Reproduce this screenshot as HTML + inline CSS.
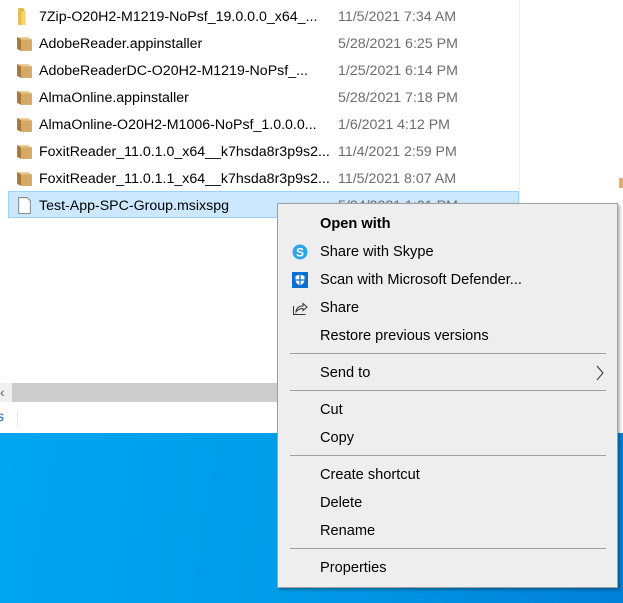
<!DOCTYPE html>
<html><head><style>
body{margin:0;width:623px;height:603px;overflow:hidden;position:relative;background:#fff;font-family:"Liberation Sans",sans-serif;}
.row{position:absolute;left:0;height:26px;width:519px;font-size:14.2px;line-height:26px;color:#000;}
.row .n{position:absolute;left:39px;white-space:nowrap;}
.row .d{position:absolute;left:338px;color:#6d6d6d;white-space:nowrap;}
.ic{position:absolute;left:16px;top:4px;width:17px;height:17px;}
.menu{position:absolute;left:277px;top:203px;width:339px;height:383px;background:#eeeeee;border:1px solid #a0a0a0;box-shadow:2px 2px 3px rgba(0,0,0,.3);}
.mi{position:absolute;left:42px;font-size:14.6px;color:#000;line-height:20px;white-space:nowrap;}
.sep{position:absolute;left:12px;width:316px;height:1px;background:#a0a0a0;}
</style></head><body>
<div style="position:absolute;left:519px;top:0;width:1px;height:383px;background:#f0f0f0"></div>
<div style="position:absolute;left:8px;top:191px;width:509px;height:25px;background:#cce8ff;border:1px solid #99d1ff"></div>

<div class="row" style="top:4px"><svg class="ic" viewBox="0 0 16 16"><path d="M2 0h5l1 2v14H2z" fill="#e8b84a"/><path d="M5 3h4v13H5z" fill="#f6d36e"/></svg><span class="n">7Zip-O20H2-M1219-NoPsf_19.0.0.0_x64_...</span><span class="d">11/5/2021 7:34 AM</span></div>
<div class="row" style="top:31px"><svg class="ic" viewBox="0 0 16 16"><path d="M1 2l4 2v11L1 13z" fill="#a8773a"/><path d="M5 4h10v11H5z" fill="#d6a865"/><path d="M1 2h10l4 2H5z" fill="#e9c588"/></svg><span class="n">AdobeReader.appinstaller</span><span class="d">5/28/2021 6:25 PM</span></div>
<div class="row" style="top:58px"><svg class="ic" viewBox="0 0 16 16"><path d="M1 2l4 2v11L1 13z" fill="#a8773a"/><path d="M5 4h10v11H5z" fill="#d6a865"/><path d="M1 2h10l4 2H5z" fill="#e9c588"/></svg><span class="n">AdobeReaderDC-O20H2-M1219-NoPsf_...</span><span class="d">1/25/2021 6:14 PM</span></div>
<div class="row" style="top:85px"><svg class="ic" viewBox="0 0 16 16"><path d="M1 2l4 2v11L1 13z" fill="#a8773a"/><path d="M5 4h10v11H5z" fill="#d6a865"/><path d="M1 2h10l4 2H5z" fill="#e9c588"/></svg><span class="n">AlmaOnline.appinstaller</span><span class="d">5/28/2021 7:18 PM</span></div>
<div class="row" style="top:112px"><svg class="ic" viewBox="0 0 16 16"><path d="M1 2l4 2v11L1 13z" fill="#a8773a"/><path d="M5 4h10v11H5z" fill="#d6a865"/><path d="M1 2h10l4 2H5z" fill="#e9c588"/></svg><span class="n">AlmaOnline-O20H2-M1006-NoPsf_1.0.0.0...</span><span class="d">1/6/2021 4:12 PM</span></div>
<div class="row" style="top:139px"><svg class="ic" viewBox="0 0 16 16"><path d="M1 2l4 2v11L1 13z" fill="#a8773a"/><path d="M5 4h10v11H5z" fill="#d6a865"/><path d="M1 2h10l4 2H5z" fill="#e9c588"/></svg><span class="n">FoxitReader_11.0.1.0_x64__k7hsda8r3p9s2...</span><span class="d">11/4/2021 2:59 PM</span></div>
<div class="row" style="top:166px"><svg class="ic" viewBox="0 0 16 16"><path d="M1 2l4 2v11L1 13z" fill="#a8773a"/><path d="M5 4h10v11H5z" fill="#d6a865"/><path d="M1 2h10l4 2H5z" fill="#e9c588"/></svg><span class="n">FoxitReader_11.0.1.1_x64__k7hsda8r3p9s2...</span><span class="d">11/5/2021 8:07 AM</span></div>
<div class="row" style="top:193px"><svg class="ic" viewBox="0 0 16 16"><path d="M2.5 .5h8l3 3v12h-11z" fill="#fff" stroke="#8a8a8a"/></svg><span class="n">Test-App-SPC-Group.msixspg</span><span class="d">5/24/2021 1:01 PM</span></div>
<div style="position:absolute;left:619px;top:178px;width:4px;height:10px;background:#e0b070"></div>

<div style="position:absolute;left:0;top:383px;width:12px;height:19px;background:#f0f0f0;color:#606060;font-size:14px;line-height:19px">&#8249;</div>
<div style="position:absolute;left:12px;top:383px;width:290px;height:19px;background:#cdcdcd"></div>
<div style="position:absolute;left:0;top:402px;width:300px;height:31px;background:#fff"></div>
<div style="position:absolute;left:-3px;top:408px;font-size:14px;color:#1e5fb0">s</div>
<div style="position:absolute;left:17px;top:410px;width:1px;height:16px;background:#e5e5e5"></div>
<div style="position:absolute;left:0;top:433px;width:623px;height:170px;background:linear-gradient(100deg,#00a6f0 0%,#009be8 50%,#0080d8 100%)"></div>

<div class="menu">
<div class="mi" style="top:10px;font-weight:bold">Open with</div>
<svg style="position:absolute;left:14px;top:40px" width="16" height="16" viewBox="0 0 16 16"><circle cx="8" cy="8" r="7.5" fill="#2aa6e8"/><text x="8" y="12.5" font-size="12" font-weight="bold" fill="#fff" text-anchor="middle" font-family="Liberation Sans">S</text></svg>
<div class="mi" style="top:38px">Share with Skype</div>
<svg style="position:absolute;left:14px;top:68px" width="16" height="16" viewBox="0 0 16 16"><rect width="16" height="16" fill="#0a6fd0"/><path d="M8 2.5l4.5 1.5v4c0 2.5-2 4.2-4.5 5.5C5.5 12.2 3.5 10.5 3.5 8V4z" fill="#fff"/><path d="M8 2.5v11M3.5 8h9" stroke="#0a6fd0" stroke-width="1.3"/></svg>
<div class="mi" style="top:66px">Scan with Microsoft Defender...</div>
<svg style="position:absolute;left:14px;top:96px" width="16" height="16" viewBox="0 0 16 16" fill="none" stroke="#333" stroke-width="1"><path d="M1.5 6v8.5h12"/><path d="M4 12c0-4 3-6 7-6V3.5l4 3.5-4 3.5V8.5c-3 0-5.5 1-7 3.5z"/></svg>
<div class="mi" style="top:94px">Share</div>
<div class="mi" style="top:122px">Restore previous versions</div>
<div class="sep" style="top:149px"></div>
<div class="mi" style="top:159px">Send to</div>
<svg style="position:absolute;left:317px;top:161px" width="10" height="16" viewBox="0 0 10 16" fill="none" stroke="#333"><path d="M2 1l6 7-6 7"/></svg>
<div class="sep" style="top:186px"></div>
<div class="mi" style="top:196px">Cut</div>
<div class="mi" style="top:224px">Copy</div>
<div class="sep" style="top:251px"></div>
<div class="mi" style="top:261px">Create shortcut</div>
<div class="mi" style="top:289px">Delete</div>
<div class="mi" style="top:317px">Rename</div>
<div class="sep" style="top:344px"></div>
<div class="mi" style="top:354px">Properties</div>
</div>
</body></html>
